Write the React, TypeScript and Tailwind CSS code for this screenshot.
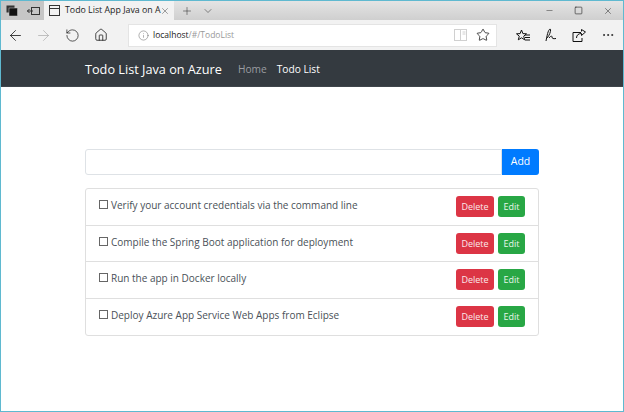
import { ArrowLeft, ArrowRight, ChevronDown, Home, Info, Minus, MoreHorizontal, Plus, RotateCw, Square, Star, X } from "lucide-react";

const todos = [
  "Verify your account credentials via the command line",
  "Compile the Spring Boot application for deployment",
  "Run the app in Docker locally",
  "Deploy Azure App Service Web Apps from Eclipse",
];

function TabStrip() {
  return (
    <div className="flex h-[19px] items-stretch bg-gradient-to-b from-[#e4e4e4] to-[#cfcfcf] text-[#222]">
      <div className="flex w-[43px] items-center gap-[9px] bg-[#c6c6c6] pl-[5px]">
        <svg width="12" height="12" viewBox="0 0 12 12">
          <rect x="0.5" y="0.5" width="8" height="7" fill="#333" />
          <rect x="3" y="3" width="8.5" height="8" fill="#111" stroke="#ccc" strokeWidth="0.5" />
        </svg>
        <svg width="13" height="10" viewBox="0 0 13 10" fill="none" stroke="#333">
          <rect x="4.5" y="1.5" width="8" height="7" />
          <path d="M0 5h6M2.5 3l-2 2 2 2" />
        </svg>
      </div>
      <div className="flex w-[130px] items-center bg-[#f2f2f2] pl-[5px]">
        <svg width="11" height="11" viewBox="0 0 11 11" fill="none" stroke="#333">
          <rect x="0.5" y="0.5" width="10" height="10" />
          <path d="M0.5 3.5h10" />
        </svg>
        <span className="ml-[5px] w-[91px] whitespace-nowrap text-[8.8px] leading-none">
          Todo List App Java on A
        </span>
        <X size={10} strokeWidth={1} className="ml-[4px]" />
      </div>
      <div className="flex items-center gap-[9px] pl-[7px]">
        <Plus size={12} strokeWidth={1} />
        <ChevronDown size={12} strokeWidth={1} />
      </div>
      <div className="ml-auto flex items-center gap-[20px] pr-[10px]">
        <Minus size={9} strokeWidth={1.2} />
        <Square size={9} strokeWidth={1.6} />
        <X size={10} strokeWidth={1.2} />
      </div>
    </div>
  );
}

function Toolbar() {
  return (
    <div className="flex h-[30px] items-center bg-[#f2f2f2] text-[#111]">
      <div className="flex w-[127px] items-center pl-[6px]">
        <ArrowLeft size={17} strokeWidth={1.1} />
        <ArrowRight size={17} strokeWidth={1} className="ml-[11px] text-[#aaa]" />
        <RotateCw size={15} strokeWidth={1.1} className="ml-[13px] -scale-x-100" />
        <Home size={14} strokeWidth={1.3} className="ml-[14px]" />
      </div>
      <div className="flex h-[23px] w-[369px] items-center border border-[#e4e4e4] bg-white pl-[9px]">
        <Info size={11} strokeWidth={1} className="text-[#555]" />
        <span className="ml-[4px] pt-[1px] text-[8.5px] text-[#222]">
          localhost<span className="text-[#999]">/#/TodoList</span>
        </span>
        <svg width="13" height="12" viewBox="0 0 13 12" fill="none" stroke="#d0d0d0" className="ml-auto mr-[9px]">
          <rect x="0.5" y="0.5" width="12" height="11" />
          <path d="M6.500 0.5v11M8.500 3h3M8.500 5h3" />
        </svg>
        <Star size={14} strokeWidth={1.3} className="mr-[6px]" />
      </div>
      <div className="ml-[19px] flex items-center gap-[15px]">
        <svg width="14" height="13" viewBox="0 0 14 13" fill="none" stroke="#111" strokeWidth="1">
          <path d="M5.500 1l1.400 3.600 3.600.2-2.800 2.400 1 3.600-3.200-2-3.200 2 1-3.600L.5 4.800l3.600-.2z" />
          <path d="M9 6h5M9 8.500h5M9 11h5" />
        </svg>
        <svg width="12" height="14" viewBox="0 0 12 14" fill="none" stroke="#111" strokeWidth="1">
          <path d="M1 13C2 8 3 2 5 1c1.500 0 0 6-3 9M4 10c1.500-2 3-2.500 3-1s1 2 4 1.500" />
        </svg>
        <svg width="14" height="13" viewBox="0 0 14 13" fill="none" stroke="#111" strokeWidth="1">
          <path d="M9 3.500H1v9h9V9M4.500 9c0-3 2-4.500 5-4.500V6.500L13.500 3 9.500 0.500V2.500" />
        </svg>
        <MoreHorizontal size={14} strokeWidth={1.3} />
      </div>
    </div>
  );
}

function TodoRow({ text, last }: { text: string; last: boolean }) {
  return (
    <li className={`flex h-[36.5px] items-center justify-between px-[13px] ${last ? "" : "border-b border-[#dfdfdf]"}`}>
      <span className="flex -translate-y-[1px] items-center text-[10px] text-[#495057]">
        <span className="mr-[3px] h-[9px] w-[9px] -translate-y-[1px] border border-[#666]" />
        {text}
      </span>
      <span className="flex gap-[4px]">
        <button className="h-[21px] w-[38px] rounded-[3px] bg-[#dc3545] text-[9px] text-[#fbe9eb]">Delete</button>
        <button className="h-[21px] w-[27px] rounded-[3px] bg-[#28a745] text-[9px] text-[#e9f6ec]">Edit</button>
      </span>
    </li>
  );
}

export default function App() {
  return (
    <div className="flex h-[412px] w-[624px] flex-col overflow-hidden border border-[#5fb9d0] bg-white font-['Open_Sans',sans-serif]">
      <TabStrip />
      <Toolbar />
      <nav className="flex h-[37px] items-center border-b border-[#3f454b] bg-[#343a40] pl-[84px] pt-[3px]">
        <span className="text-[12.7px] text-white">Todo List Java on Azure</span>
        <span className="ml-[16px] text-[10.2px] text-[#9a9da0]">Home</span>
        <span className="ml-[10px] text-[10.2px] text-white">Todo List</span>
      </nav>
      <main className="px-[84px] pt-[62px]">
        <div className="flex h-[26px]">
          <input className="min-w-0 flex-1 rounded-l-[3px] border border-[#dee2e6] bg-white" />
          <button className="w-[37px] rounded-r-[3px] bg-[#007bff] text-[10.5px] text-white">Add</button>
        </div>
        <ul className="mt-[13px] rounded-[3px] border border-[#dfdfdf]">
          {todos.map((t, i) => (
            <TodoRow key={t} text={t} last={i === todos.length - 1} />
          ))}
        </ul>
      </main>
    </div>
  );
}
